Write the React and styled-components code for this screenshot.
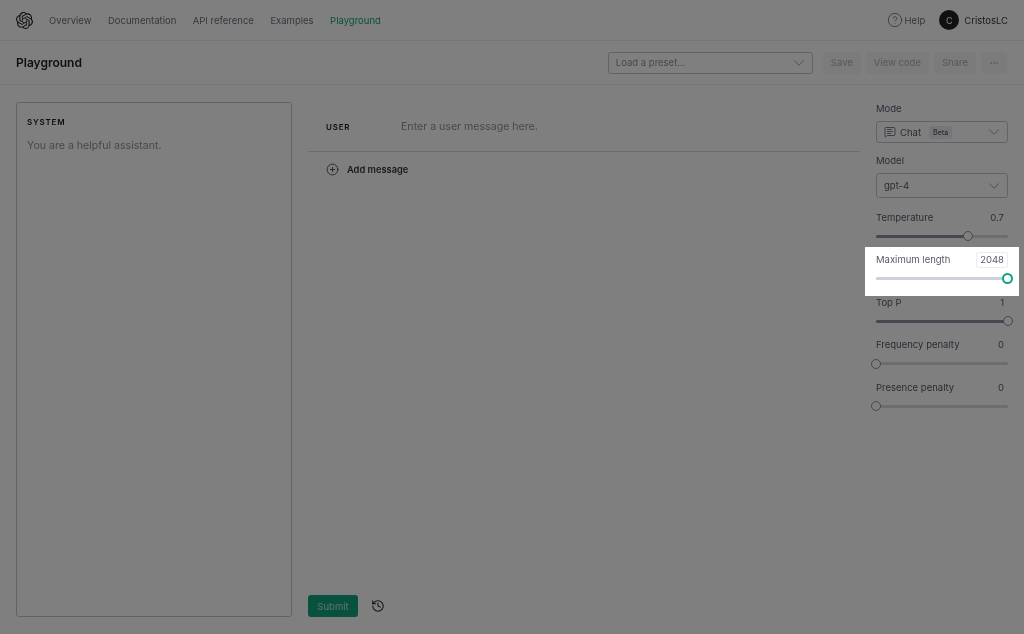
import styled, { createGlobalStyle } from "styled-components";
import { ChevronDown, CircleHelp, CirclePlus, History, MessageSquareText, Ellipsis } from "lucide-react";

const Global = createGlobalStyle`
    html, body {
        margin: 0;
        padding: 0;
        background: #fff;
    }
    * {
        box-sizing: border-box;
    }
`

const Page = styled.div`
    width: 1024px;
    height: 634px;
    overflow: hidden;
    display: flex;
    flex-direction: column;
    background: #fff;
    color: #202123;
    font-family: Inter, "Liberation Sans", sans-serif;
    font-size: 9.5px;
    filter: blur(.4px);
`

const Dim = styled.div`
    position: fixed;
    inset: 0;
    background: rgba(0, 0, 0, .5);
    z-index: 1;
`

const TopBar = styled.header`
    height: 41px;
    flex: none;
    display: flex;
    align-items: center;
    padding: 0 16px;
    border-bottom: 1px solid #ececf1;
`

const Logo = styled.svg`
    width: 17px;
    height: 17px;
    margin-right: 16px;
    color: #202123;
`

const NavItem = styled.a`
    margin-right: 16.5px;
    color: ${props => props.$active ? "#10a37f" : "#6e6e80"};
`

const Spacer = styled.div`
    flex: 1;
`

const Help = styled.div`
    display: flex;
    align-items: center;
    gap: 2px;
    color: #6e6e80;
    margin-right: 14px;
`

const Avatar = styled.div`
    width: 20px;
    height: 20px;
    border-radius: 50%;
    background: #202123;
    color: #fff;
    font-size: 9px;
    display: flex;
    align-items: center;
    justify-content: center;
    margin-right: 5px;
`

const UserName = styled.span`
    color: #353740;
`

const SubBar = styled.div`
    height: 44px;
    flex: none;
    display: flex;
    align-items: center;
    padding: 0 17px 0 16px;
    border-bottom: 1px solid #ececf1;
`

const PageTitle = styled.h1`
    margin: 0;
    flex: 1;
    font-size: 12px;
    font-weight: 600;
    color: #202123;
`

const Select = styled.div`
    display: flex;
    align-items: center;
    justify-content: space-between;
    flex: none;
    height: 22px;
    padding: 0 4px 0 7px;
    border: 1px solid #c5c5d2;
    border-radius: 3px;
    background: #fff;
`

const PresetSelect = styled(Select)`
    width: 205px;
    margin-right: 5px;
    color: #8e8ea0;
`

const Ghost = styled.button`
    height: 22px;
    margin-left: 5px;
    padding: 0 8px;
    border: 0;
    border-radius: 3px;
    background: #f7f7f8;
    color: #acacbe;
    font: inherit;
    display: flex;
    align-items: center;
`

const Main = styled.main`
    flex: 1;
    display: flex;
    padding: 17px 16px 17px;
`

const SystemBox = styled.section`
    width: 276px;
    flex: none;
    border: 1px solid #c5c5d2;
    border-radius: 3px;
    padding: 14px 10px;
`

const Caps = styled.div`
    font-size: 8px;
    font-weight: 600;
    letter-spacing: .8px;
    color: #202123;
`

const Muted = styled.div`
    color: #8e8ea0;
    font-size: 10.6px;
`

const SystemText = styled(Muted)`
    margin-top: 12px;
`

const Center = styled.section`
    flex: 1;
    margin: 0 16px;
    display: flex;
    flex-direction: column;
`

const MessageRow = styled.div`
    display: flex;
    align-items: center;
    height: 50px;
    padding-left: 18px;
    border-bottom: 1px solid #d9d9e3;
`

const UserLabel = styled(Caps)`
    width: 75px;
`

const AddRow = styled.div`
    display: flex;
    align-items: center;
    gap: 8px;
    height: 35px;
    padding-left: 18px;
    font-size: 9.3px;
    font-weight: 600;
    color: #353740;
`

const Actions = styled.div`
    margin-top: auto;
    display: flex;
    align-items: center;
    gap: 13px;
`

const Submit = styled.button`
    width: 50px;
    height: 22px;
    border: 0;
    border-radius: 3px;
    background: #10a37f;
    color: rgba(255, 255, 255, .7);
    font: inherit;
`

const Side = styled.aside`
    width: 132px;
    flex: none;
    display: flex;
    flex-direction: column;
`

const Label = styled.div`
    height: 12px;
    line-height: 14px;
    color: #565869;
    margin-bottom: 7px;
`

const SideSelect = styled(Select)`
    width: 132px;
    height: ${props => props.$tall ? "25px" : "22px"};
    margin-bottom: 11px;
    color: #565869;
`

const Inline = styled.div`
    display: flex;
    align-items: center;
    gap: 4px;
`

const Beta = styled.span`
    font-size: 7px;
    font-weight: 500;
    padding: 2px 4px;
    border-radius: 2px;
    background: #ececf1;
    margin-left: 4px;
`

const Param = styled.div`
    flex: none;
    height: ${props => props.$short ? "37.5px" : "42.5px"};
`

const Lit = styled.div`
    position: relative;
    z-index: 2;
    flex: none;
    background: #fff;
    height: 49px;
    margin: 0 -11px -1.2px;
    padding: 5px 11px 0;
`

const ParamHead = styled.div`
    display: flex;
    justify-content: space-between;
    align-items: center;
    height: 16px;
    color: #565869;
`

const Value = styled.span`
    padding-right: 4px;
`

const ValueBox = styled.span`
    border: 1px solid #ececf1;
    border-radius: 2px;
    padding: 0 3px;
    height: 16px;
    line-height: 14px;
`

const Track = styled.div`
    position: relative;
    height: 3px;
    margin-top: 9.5px;
    border-radius: 2px;
    background: #d9d9e3;
`

const Fill = styled.div`
    height: 100%;
    border-radius: 2px;
    background: ${props => props.$active ? "#cfcfdf" : "#8e8ea0"};
`

const Thumb = styled.div`
    position: absolute;
    top: ${props => props.$active ? "-4px" : "-3.5px"};
    width: ${props => props.$active ? "11px" : "10px"};
    height: ${props => props.$active ? "11px" : "10px"};
    margin-left: ${props => props.$active ? "-6px" : "-5px"};
    border-radius: 50%;
    background: #fff;
    border: ${props => props.$active ? "2px solid #10a37f" : "1.5px solid #8e8ea0"};
`

function Slider({ value, active }) {
    return (
        <Track>
            <Fill $active={active} style={{ width: `${value}%` }} />
            <Thumb $active={active} style={{ left: `${value}%` }} />
        </Track>
    )
}

function OpenAILogo() {
    return (
        <Logo viewBox="0 0 24 24" fill="currentColor">
            <path d="M22.28 9.82a5.98 5.98 0 0 0-.52-4.91 6.05 6.05 0 0 0-6.51-2.9A6.07 6.07 0 0 0 4.98 4.18a5.98 5.98 0 0 0-4 2.9 6.05 6.05 0 0 0 .74 7.1 5.98 5.98 0 0 0 .51 4.91 6.05 6.05 0 0 0 6.52 2.9A5.98 5.98 0 0 0 13.26 24a6.06 6.06 0 0 0 5.77-4.21 5.99 5.99 0 0 0 4-2.9 6.06 6.06 0 0 0-.75-7.07zM13.26 22.43a4.48 4.48 0 0 1-2.88-1.04l.14-.08 4.78-2.76a.79.79 0 0 0 .39-.68v-6.74l2.02 1.17a.07.07 0 0 1 .04.05v5.58a4.5 4.5 0 0 1-4.49 4.5zM3.6 18.3a4.47 4.47 0 0 1-.53-3.01l.14.08 4.78 2.76a.77.77 0 0 0 .78 0l5.84-3.37v2.33a.08.08 0 0 1-.03.06L9.74 19.95a4.5 4.5 0 0 1-6.14-1.65zM2.34 7.9a4.49 4.49 0 0 1 2.34-1.97V11.6a.77.77 0 0 0 .39.68l5.81 3.35-2.02 1.17a.08.08 0 0 1-.07 0l-4.83-2.79A4.5 4.5 0 0 1 2.34 7.87zm16.6 3.86-5.84-3.39 2.02-1.16a.08.08 0 0 1 .07 0l4.83 2.79a4.49 4.49 0 0 1-.68 8.1v-5.68a.79.79 0 0 0-.4-.66zm2.01-3.02-.14-.09-4.77-2.78a.78.78 0 0 0-.79 0L9.41 9.23V6.9a.07.07 0 0 1 .03-.06l4.83-2.79a4.5 4.5 0 0 1 6.68 4.66zM8.31 12.86 6.29 11.7a.08.08 0 0 1-.04-.06V6.07a4.5 4.5 0 0 1 7.37-3.45l-.14.08L8.7 5.46a.79.79 0 0 0-.39.68zm1.1-2.37 2.6-1.5 2.61 1.5v3l-2.6 1.5-2.61-1.5z" />
        </Logo>
    )
}

function Chevron() {
    return <ChevronDown size={18} strokeWidth={1.2} color="#8e8ea0" />
}

function App() {
    return (
        <Page>
            <Global />
            <Dim />
            <TopBar>
                <OpenAILogo />
                <NavItem>Overview</NavItem>
                <NavItem>Documentation</NavItem>
                <NavItem>API reference</NavItem>
                <NavItem>Examples</NavItem>
                <NavItem $active>Playground</NavItem>
                <Spacer />
                <Help><CircleHelp size={16} strokeWidth={1.3} /> Help</Help>
                <Avatar>C</Avatar>
                <UserName>CristosLC</UserName>
            </TopBar>
            <SubBar>
                <PageTitle>Playground</PageTitle>
                <PresetSelect>Load a preset... <Chevron /></PresetSelect>
                <Ghost>Save</Ghost>
                <Ghost>View code</Ghost>
                <Ghost>Share</Ghost>
                <Ghost><Ellipsis size={10} /></Ghost>
            </SubBar>
            <Main>
                <SystemBox>
                    <Caps>SYSTEM</Caps>
                    <SystemText>You are a helpful assistant.</SystemText>
                </SystemBox>
                <Center>
                    <MessageRow>
                        <UserLabel>USER</UserLabel>
                        <Muted>Enter a user message here.</Muted>
                    </MessageRow>
                    <AddRow><CirclePlus size={13} strokeWidth={1.5} /> Add message</AddRow>
                    <Actions>
                        <Submit>Submit</Submit>
                        <History size={14} strokeWidth={1.75} />
                    </Actions>
                </Center>
                <Side>
                    <Label>Mode</Label>
                    <SideSelect>
                        <Inline><MessageSquareText size={12} strokeWidth={1.5} /> Chat <Beta>Beta</Beta></Inline>
                        <Chevron />
                    </SideSelect>
                    <Label>Model</Label>
                    <SideSelect $tall>gpt-4 <Chevron /></SideSelect>
                    <Param $short>
                        <ParamHead>Temperature <Value>0.7</Value></ParamHead>
                        <Slider value={70} />
                    </Param>
                    <Lit>
                        <ParamHead>Maximum length <ValueBox>2048</ValueBox></ParamHead>
                        <Slider value={100} active />
                    </Lit>
                    <Param>
                        <ParamHead>Top P <Value>1</Value></ParamHead>
                        <Slider value={100} />
                    </Param>
                    <Param>
                        <ParamHead>Frequency penalty <Value>0</Value></ParamHead>
                        <Slider value={0} />
                    </Param>
                    <Param>
                        <ParamHead>Presence penalty <Value>0</Value></ParamHead>
                        <Slider value={0} />
                    </Param>
                </Side>
            </Main>
        </Page>
    )
}

export default App
